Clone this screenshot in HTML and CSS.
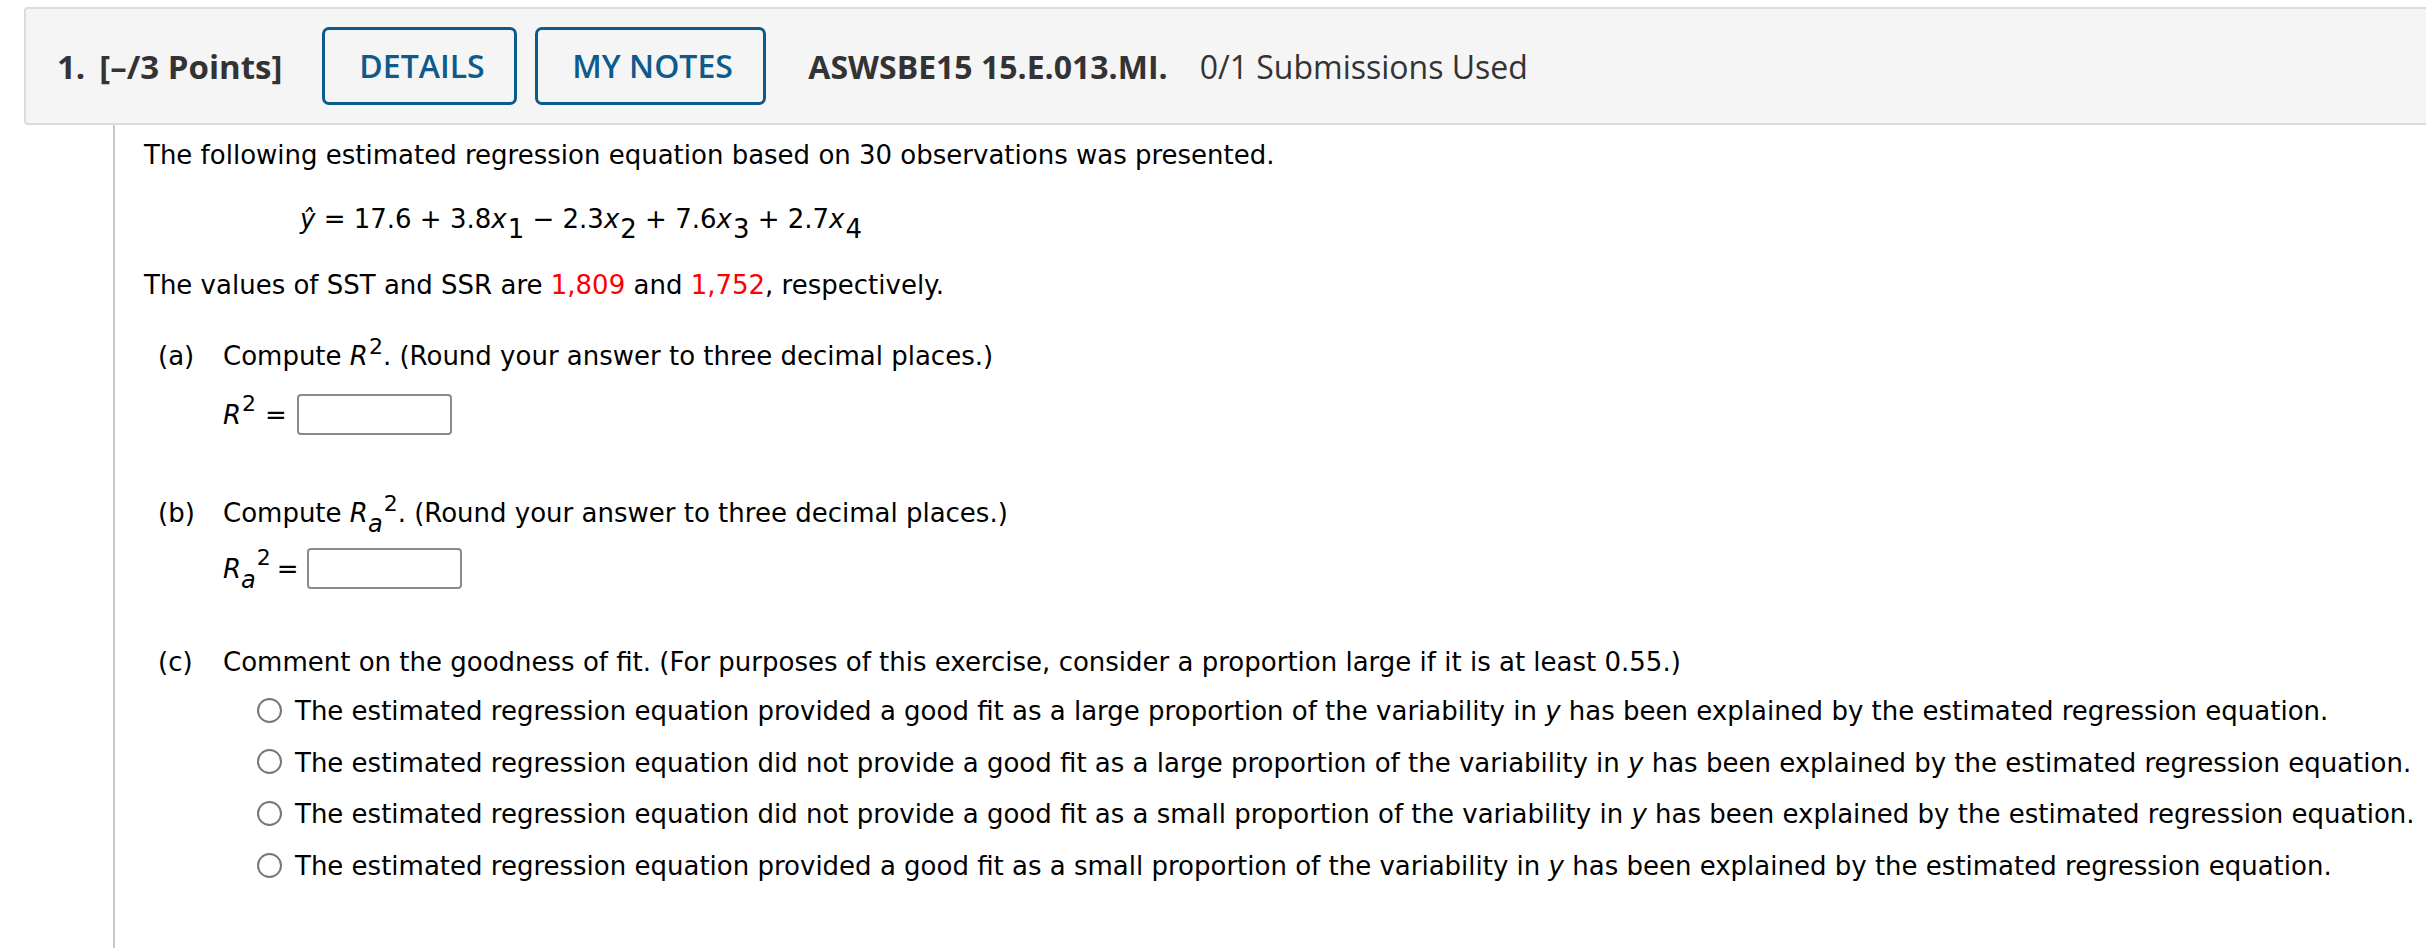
FILE: index.html
```html
<!DOCTYPE html>
<html lang="en">
<head>
<meta charset="utf-8">
<title>Question 1</title>
<link rel="stylesheet" href="styles.css">
</head>
<body>
<div class="page">
  <header class="qhead">
    <span class="qnum">1.</span>
    <span class="qpts">[–/3 Points]</span>
    <button class="btn btn-details">DETAILS</button>
    <button class="btn btn-notes">MY NOTES</button>
    <span class="qid">ASWSBE15 15.E.013.MI.</span>
    <span class="subs">0/1 Submissions Used</span>
  </header>
  <div class="qbody">
    <p class="line l1">The following estimated regression equation based on 30 observations was presented.</p>
    <p class="line eq"><i class="yhat">ŷ</i> = 17.6 + 3.8<i>x</i><span class="sb">1</span> − 2.3<i>x</i><span class="sb">2</span> + 7.6<i>x</i><span class="sb">3</span> + 2.7<i>x</i><span class="sb">4</span></p>
    <p class="line l3">The values of SST and SSR are <span class="red">1,809</span> and <span class="red">1,752</span>, respectively.</p>

    <div class="part part-a">
      <p class="line pq"><span class="plabel">(a)</span><span>Compute <i>R</i><span class="sp">2</span>. (Round your answer to three decimal places.)</span></p>
      <div class="answer ans-a"><span class="alabel"><i>R</i><span class="sp2">2</span></span><span class="eqsign">=</span><input class="box" type="text" aria-label="R squared"></div>
    </div>

    <div class="part part-b">
      <p class="line pq"><span class="plabel">(b)</span><span>Compute <i>R</i><span class="sbi">a</span><span class="sp">2</span>. (Round your answer to three decimal places.)</span></p>
      <div class="answer ans-b"><span class="alabel"><i>R</i><span class="sbi">a</span><span class="sp2">2</span></span><span class="eqsign">=</span><input class="box" type="text" aria-label="adjusted R squared"></div>
    </div>

    <div class="part part-c">
      <p class="line pq"><span class="plabel">(c)</span><span>Comment on the goodness of fit. (For purposes of this exercise, consider a proportion large if it is at least 0.55.)</span></p>
      <ul class="options">
        <li class="opt"><span class="radio"></span><span>The estimated regression equation provided a good fit as a large proportion of the variability in <i>y</i> has been explained by the estimated regression equation.</span></li>
        <li class="opt"><span class="radio"></span><span>The estimated regression equation did not provide a good fit as a large proportion of the variability in <i>y</i> has been explained by the estimated regression equation.</span></li>
        <li class="opt"><span class="radio"></span><span>The estimated regression equation did not provide a good fit as a small proportion of the variability in <i>y</i> has been explained by the estimated regression equation.</span></li>
        <li class="opt"><span class="radio"></span><span>The estimated regression equation provided a good fit as a small proportion of the variability in <i>y</i> has been explained by the estimated regression equation.</span></li>
      </ul>
    </div>
  </div>
</div>
</body>
</html>
```

FILE: styles.css
```css
html, body {
  margin: 0;
  padding: 0;
  background: #ffffff;
}
body {
  width: 2426px;
  height: 948px;
  overflow: hidden;
}
.page {
  padding-top: 7px;
}
.qhead {
  margin-left: 24px;
  height: 114px;
  background: #f5f5f5;
  border: 2px solid #dcdcdc;
  border-right: none;
  border-radius: 4px 0 0 4px;
  display: flex;
  align-items: center;
  padding-left: 31px;
  font-family: "Open Sans", sans-serif;
  color: #333333;
  white-space: nowrap;
}
.qnum {
  font-size: 33px;
  font-weight: 700;
  margin-right: 14px;
}
.qpts {
  font-size: 33px;
  font-weight: 700;
  margin-right: 40px;
}
.btn {
  box-sizing: border-box;
  height: 78px;
  padding: 0 34px;
  background: transparent;
  border: 3px solid #0d5a8b;
  border-radius: 7px;
  color: #0d5a8b;
  font-family: "Open Sans", sans-serif;
  font-size: 32px;
  font-weight: 600;
  line-height: 1;
}
.btn-details {
  width: 195px;
  margin-right: 18px;
}
.btn-notes {
  width: 231px;
  margin-right: 42px;
}
.qid {
  font-size: 32px;
  font-weight: 700;
  margin-right: 32px;
}
.subs {
  font-size: 32px;
  font-weight: 400;
}

.qbody {
  margin-left: 113px;
  border-left: 2px solid #c8c8c8;
  height: 823px;
  box-sizing: border-box;
  padding-top: 13px;
  padding-left: 29px;
  font-family: "DejaVu Sans", Verdana, sans-serif;
  font-size: 26px;
  color: #000000;
  white-space: nowrap;
}
.line {
  margin: 0;
  line-height: 34px;
  height: 34px;
}
i {
  font-style: italic;
}
.eq {
  margin-top: 30px;
  padding-left: 156px;
}
.sb {
  line-height: 0;
  position: relative;
  top: 10px;
  margin-left: 1px;
}
.l3 {
  margin-top: 32px;
}
.red {
  color: #ff0000;
}
.part-a {
  margin-top: 37px;
}
.plabel {
  display: inline-block;
  width: 65px;
  padding-left: 14px;
}
.sp {
  font-size: 22px;
  line-height: 0;
  position: relative;
  top: -11px;
  margin-left: 1px;
}
.sp2 {
  font-size: 22px;
  line-height: 0;
  position: relative;
  top: -13px;
  margin-left: 1px;
}
.sbi {
  font-style: italic;
  line-height: 0;
  font-size: 24px;
  position: relative;
  top: 10px;
}
.answer {
  display: flex;
  align-items: center;
  height: 41px;
  padding-left: 79px;
  line-height: 34px;
}
.ans-a {
  margin-top: 21px;
}
.ans-b {
  margin-top: 18px;
}
.eqsign {
  margin-left: 9px;
  margin-right: 10px;
}
.ans-b .eqsign {
  margin-left: 6px;
  margin-right: 8px;
}
.box {
  box-sizing: border-box;
  width: 155px;
  height: 41px;
  margin: 0;
  border: 2px solid #8a8a8a;
  border-radius: 4px;
  background: #ffffff;
  padding: 0 6px;
  font-family: "DejaVu Sans", sans-serif;
  font-size: 24px;
}
.part-b {
  margin-top: 61px;
}
.part-c {
  margin-top: 56px;
}
.options {
  list-style: none;
  margin: 15px 0 0 0;
  padding: 0 0 0 113px;
  display: flex;
  flex-direction: column;
  gap: 17.7px;
}
.opt {
  display: flex;
  align-items: center;
  height: 34px;
  line-height: 34px;
}
.radio {
  box-sizing: border-box;
  width: 25px;
  height: 25px;
  border: 2px solid #777777;
  border-radius: 50%;
  background: #ffffff;
  margin-right: 13px;
  flex: none;
  position: relative;
  top: -1px;
}
```
